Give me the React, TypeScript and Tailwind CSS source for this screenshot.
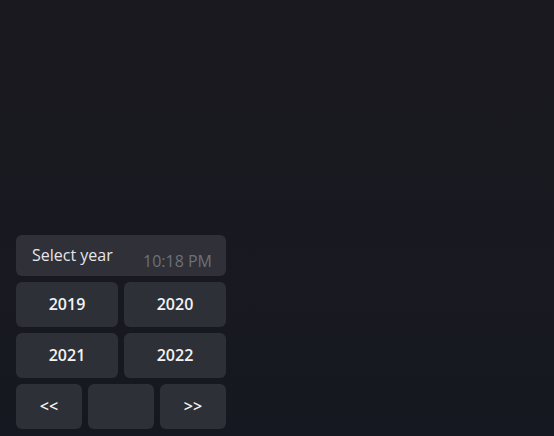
import React from 'react';

const years = ['2019', '2020', '2021', '2022'];

const Key = ({ children, className = '' }: { children?: React.ReactNode; className?: string }) => (
  <button
    className={`h-[45px] rounded-md bg-[#2e3038] text-[#f2f2f4] font-semibold text-[16px] flex items-center justify-center pb-[2px] ${className}`}
  >
    {children}
  </button>
);

const App = () => {
  return (
    <div
      className="w-[554px] h-[436px] flex flex-col justify-end pl-4 pb-[7px] bg-gradient-to-b from-[#1a191f] to-[#161821]"
      style={{ fontFamily: '"Open Sans", "Noto Sans", sans-serif' }}
    >
      <div className="w-[210px] flex flex-col gap-[6px]">
        <div className="h-[41px] rounded-md bg-[#2f3038] flex justify-between pl-4 pr-[14px]">
          <span className="text-[16px] text-[#e6e6ea] pt-[8px]">Select year</span>
          <span className="text-[16px] text-[#6e7079] self-end pb-[3px]">10:18 PM</span>
        </div>
        <div className="grid grid-cols-2 gap-[6px]">
          {years.map((y) => (
            <Key key={y}>{y}</Key>
          ))}
        </div>
        <div className="grid grid-cols-3 gap-[6px]">
          <Key className="text-[14px]">&lt;&lt;</Key>
          <Key />
          <Key className="text-[14px]">&gt;&gt;</Key>
        </div>
      </div>
    </div>
  );
};

export default App;
